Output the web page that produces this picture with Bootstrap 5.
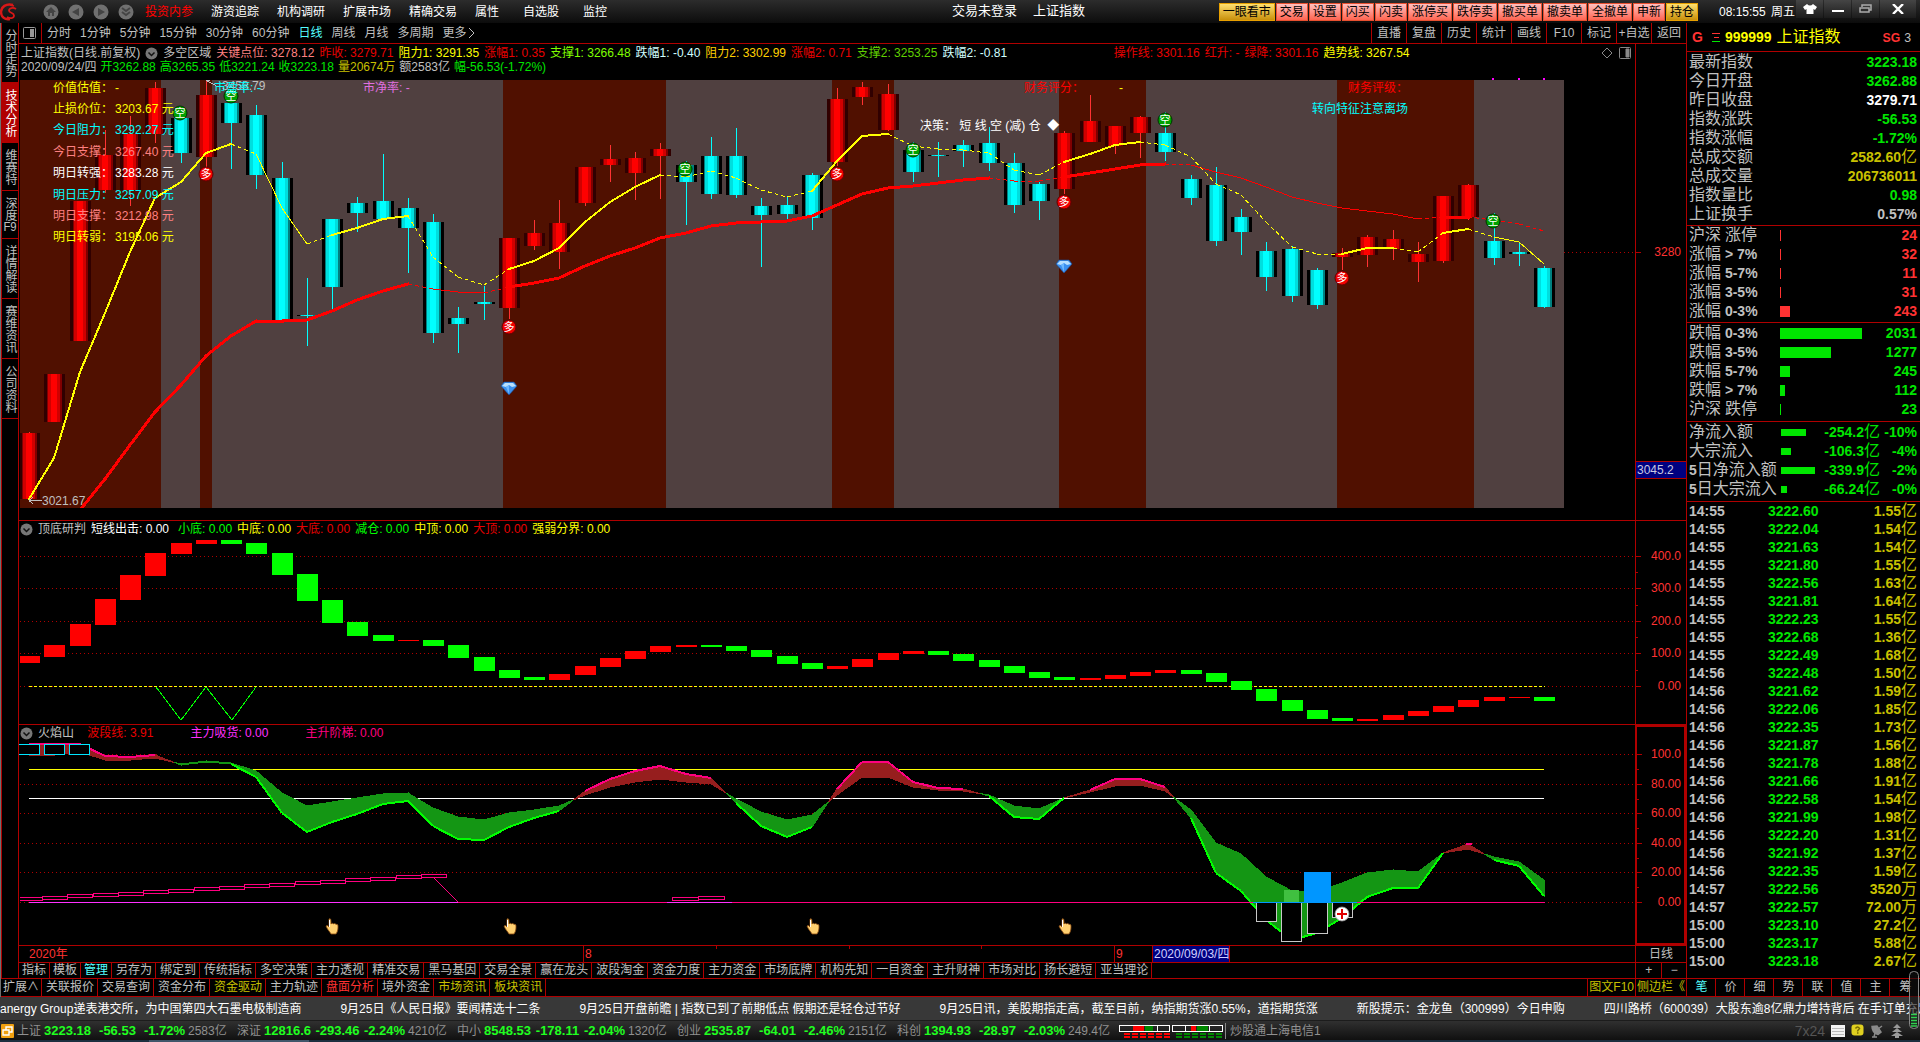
<!DOCTYPE html>
<html lang="zh-CN">
<head>
<meta charset="utf-8">
<meta name="viewport" content="width=device-width, initial-scale=1">
<title>上证指数 999999</title>
<link href="https://cdn.jsdelivr.net/npm/bootstrap@5.3.0/dist/css/bootstrap.min.css" rel="stylesheet">
<style>
:root{--edge:#b00000;--txt:#c0c0c0;--up:#ff3232;--down:#00e600;--gold:#c8c000;--mute:#909090}
html,body{height:100%}
body{background:#000;color:var(--txt);font:12px/16px "Liberation Sans","Noto Sans CJK SC",sans-serif;overflow:hidden}
button{background:none;border:0;color:inherit;padding:0;font:inherit;white-space:nowrap}
a{color:inherit;text-decoration:none}
svg{display:block}
.nowrap{white-space:nowrap}
.c-red{color:#f00}.c-up{color:var(--up)}.c-down{color:var(--down)}.c-yel{color:#ff0}.c-gold{color:var(--gold)}
.c-cyan{color:#0ff}.c-aqua{color:#5ff}.c-pale{color:#d0ffff}.c-pink{color:#ff8080}.c-rose{color:#ff0080}.c-mag{color:#ff30ff}
.c-orchid{color:#e070e0}.c-lime{color:#80ff00}.c-leaf{color:#60d000}.c-amber{color:#ffd000}.c-white{color:#fff}.c-brick{color:#e80000}
.c-grn{color:#00ff00}

.topbar{height:23px;background:linear-gradient(#2c2c2c,#0c0c0c);color:#fff}
.logo-slot{width:43px}
.round-nav{gap:9px;width:93px}
.menu-item{padding:0 9px}
.menu-item.wide{padding-left:15px}
.login{font-size:13px;gap:16px;left:952px;top:3px}
.quick{gap:1px}
.quick button{height:18px;padding:0 3px;color:#000;line-height:16px;border:1px solid #e85030;background:linear-gradient(#ffc0c0,#ff6450)}
.quick button.gold{border-color:#e8a000;background:linear-gradient(#ffe070,#c8900c)}
.clock{width:97px;padding-left:21px}
.win{height:18px;width:27px;background:linear-gradient(#454545,#1c1c1c);margin-left:1px}
.win.close{width:36px}
.win svg{margin:auto}

.left-edge{border-left:1px solid #707070}
.side{width:18px;border-left:1px solid var(--edge);border-right:1px solid var(--edge)}
.side button{writing-mode:vertical-rl;padding:6px 0 5px;line-height:16px;width:16px;border-bottom:1px solid var(--edge)}
.side button.on{background:#b00000;color:#fff}
.side .tcy{text-combine-upright:all}

.tools{height:21px;border-bottom:1px solid var(--edge)}
.tools .toggle{width:23px;border-right:1px solid var(--edge)}
.periods{gap:9px;padding-left:5px}
.acts button{width:35px;border-left:1px solid var(--edge)}

.pane{min-height:0;display:flex}
.pane+.pane{border-top:1px solid var(--edge)}
.pane-k{flex:476 1 0}.pane-a{flex:203 1 0}.pane-b{flex:220 1 0}
.plotcol{min-width:0;min-height:0}
.pane-k .plotcol{padding-bottom:12px}
.plotbox{min-height:0;position:relative}
.plotbox svg{position:absolute;inset:0;width:100%;height:100%}
.klegend{height:36px;padding:2px 0 0 2px;line-height:14px}
.klegend .first-half{width:67.7%}
.legend-line{gap:5px}
.sub-legend{height:16px;padding-left:1px;gap:5px}
.gap-wide{gap:37px}
.axis{width:51px;border-left:1px solid var(--edge);position:relative;color:var(--up)}
.axis span{position:absolute;left:0;right:0;padding-right:5px;text-align:right;margin-top:-8px}
.axis span::before{content:"";position:absolute;left:0;top:8px;width:5px;height:1px;background:var(--edge)}
.axis span.minor::before{width:2px}
.axis span.cursor{background:#000080;color:#c8c8e0;text-align:left;padding-left:1px;border:solid var(--edge);border-width:1px 0}
.axis span.cursor::before{display:none}
.pane-b .axis{border:2px solid var(--edge)}
.pane-b .axis span{padding-right:3px}
.note{position:absolute;white-space:nowrap;margin-top:-8px}
.valuation{position:absolute;left:34px;top:-3px;height:40%}
.valuation th{font-weight:400;width:62px}
.valuation td,.valuation th{padding:0}

.dates{height:17px;border-top:1px solid var(--edge)}
.dates .slot{position:relative;color:var(--up)}
.dates .datemark{position:absolute;top:0;height:16px;border-left:1px solid var(--edge);padding-left:1px}
.dates .datemark.short{height:3px}
.dates .datemark.bare{border:0}
.dates .datemark.cur{background:#000080;color:#d0d0ff;border-right:1px solid var(--edge)}
.dates .unit-col{width:51px;border-left:1px solid var(--edge)}
.strip{height:16px;border-top:1px solid var(--edge);line-height:15px}
.strip button{border-right:1px solid var(--edge);padding:0 3px 0 4px}
.strip button.narrow{padding:0 3px}
.strip .zoomers{width:51px;border-left:1px solid var(--edge)}
.strip2{height:19px;line-height:17px;border-top:1px solid var(--edge);border-bottom:1px solid var(--edge)}
.strip2 button.tight{padding:0 2px}
.strip2 button.corner{border:0;border-left:1px solid var(--edge);padding:0 1px}
.strip2 button.dock{width:51px;text-align:left}

.quote{width:234px;border-left:1px solid var(--edge);overflow:hidden}
.quote table{width:100%;font-weight:700;font-size:14px;border-collapse:collapse}
.quote td,.quote th{padding:0;line-height:19px;height:19px;white-space:nowrap}
.cjk{font-weight:400;font-size:16px;line-height:1}
.quote-head{height:28px;padding:0 9px 0 5px;font-size:14px;gap:5px}
.sect{border-top:1px solid var(--edge);padding:1px 3px 1px 2px}
.sect.tight-top{padding-top:0}
.sect.loose{padding-bottom:2px}
.sect .barcol{width:84px}
.bar{height:11px;background:var(--down);min-width:1px}
.bar.up{background:var(--up)}
.flow .bar{height:7px}
.tape td,.tape th{line-height:18px;height:18px}
.picks button{width:29px;border-right:1px solid var(--edge)}
.picks button:last-child{flex:1;border:0}
.pill{position:absolute;right:1px;bottom:13px;width:10px;height:58px}

.news{height:24px;background:#383838;border-bottom:1px solid #1c1c1c;color:#fff;gap:39px;overflow:hidden}
.status{height:19px;background:linear-gradient(#303030,#101010);color:var(--mute)}
.idx{display:grid;grid-template-columns:27px 50px 47px 47px 49px;white-space:nowrap}
.idx b{color:#20ff20;font-size:13px}
.idx b.mid{text-align:center}
.feed{border-left:1px solid #888;margin-left:2px;padding-left:4px}
.dim{color:#555;font-size:14px}
.trays{gap:6px;padding-right:16px}
.taskbar{height:2px;background:linear-gradient(90deg,#1c2f3f 0 149px,#40566a 149px 309px,#1c2f3f 309px)}
</style>
<script src="https://cdn.jsdelivr.net/npm/bootstrap@5.3.0/dist/js/bootstrap.bundle.min.js"></script>
</head>
<body class="d-flex flex-column vh-100">

<header class="topbar d-flex align-items-center position-relative flex-shrink-0">
  <div class="logo-slot">
    <svg width="18" height="20" viewBox="0 0 18 20" fill="none" stroke="#d81818"><path d="M13 3C6 1 1 5 1 10s4 8 9 7" stroke-width="2.400"/><path d="M16 7C13 5 9 6 9 8.500s5 2 5 5-4 3.500-7 1.500" stroke-width="1.800"/><path d="M10 3l4 1" stroke-width="1.500"/></svg>
  </div>
  <nav class="round-nav d-flex" aria-label="导航">
    <button aria-label="首页"><svg width="16" height="16"><circle cx="8" cy="8" r="7.500" fill="#707070"/><path d="M8 3L3 8h2v4h2V9h2v3h2V8h2z" fill="#444"/></svg></button>
    <button aria-label="后退"><svg width="16" height="16"><circle cx="8" cy="8" r="7.500" fill="#707070"/><path d="M4 8l7-4v8z" fill="#444"/></svg></button>
    <button aria-label="前进"><svg width="16" height="16"><circle cx="8" cy="8" r="7.500" fill="#707070"/><path d="M12 8L5 4v8z" fill="#444"/></svg></button>
    <button aria-label="展开"><svg width="16" height="16"><circle cx="8" cy="8" r="7.500" fill="#707070"/><path d="M4 4l4 3 4-3M4 8l4 3 4-3" fill="none" stroke="#444" stroke-width="2"/></svg></button>
  </nav>
  <nav class="d-flex flex-grow-1" aria-label="主菜单">
    <button class="menu-item c-red">投资内参</button><button class="menu-item">游资追踪</button><button class="menu-item">机构调研</button><button class="menu-item">扩展市场</button><button class="menu-item">精确交易</button><button class="menu-item">属性</button><button class="menu-item wide">自选股</button><button class="menu-item wide">监控</button>
  </nav>
  <div class="login d-flex position-absolute"><button>交易未登录</button><span>上证指数</span></div>
  <div class="quick d-flex">
    <button class="gold">一眼看市</button><button>交易</button><button>设置</button><button>闪买</button><button>闪卖</button><button>涨停买</button><button>跌停卖</button><button>撤买单</button><button>撤卖单</button><button>全撤单</button><button>申新</button><button class="gold">持仓</button>
  </div>
  <div class="clock d-flex justify-content-between nowrap"><span>08:15:55</span><span>周五</span></div>
  <div class="d-flex align-self-start pe-1">
    <button class="win d-flex" aria-label="皮肤"><svg width="14" height="10"><path d="M4 0L0 3l2 3 1.500-1V10h7V5L12 6l2-3-4-3Q7 3 4 0z" fill="#fff"/></svg></button>
    <button class="win d-flex" aria-label="最小化"><svg width="12" height="10"><path d="M0 6h12v2H0z" fill="#fff"/></svg></button>
    <button class="win d-flex" aria-label="还原"><svg width="13" height="10" fill="none" stroke="#aaa" stroke-width="1.500"><path d="M3 3V1h9v5h-2M1 4h9v4H1z"/></svg></button>
    <button class="win close d-flex" aria-label="关闭"><svg width="12" height="10"><path d="M1 0l10 10M11 0L1 10" stroke="#fff" stroke-width="2.400"/></svg></button>
  </div>
</header>

<div class="d-flex flex-grow-1 left-edge" id="work">
  <div class="d-flex flex-column flex-grow-1 plotcol">
    <div class="d-flex flex-grow-1 plotcol">
      <nav class="side d-flex flex-column align-items-center flex-shrink-0" aria-label="页面">
        <button>分时走势</button><button class="on">技术分析</button><button>维赛特</button><button>深度<span class="tcy">F9</span></button><button>详情解读</button><button>赛维资讯</button><button>公司资料</button>
      </nav>
      <main class="d-flex flex-column flex-grow-1 plotcol">
        <div class="tools d-flex align-items-stretch flex-shrink-0">
          <button class="toggle d-flex align-items-center ps-1" aria-label="侧栏"><svg width="13" height="12"><rect x=".5" y=".5" width="12" height="11" rx="1" fill="none" stroke="#999"/><path d="M7 2h4v8H7z" fill="#999"/></svg></button>
          <div class="periods d-flex flex-grow-1">
            <button>分时</button><button>1分钟</button><button>5分钟</button><button>15分钟</button><button>30分钟</button><button>60分钟</button><button class="c-aqua">日线</button><button>周线</button><button>月线</button><button>多周期</button><button class="d-flex align-items-center">更多<svg width="9" height="10"><path d="M2 0l5 5-5 5" fill="none" stroke="#c0c0c0"/></svg></button>
          </div>
          <div class="acts d-flex"><button>直播</button><button>复盘</button><button>历史</button><button>统计</button><button>画线</button><button>F10</button><button>标记</button><button>+自选</button><button>返回</button></div>
        </div>

        <section class="pane pane-k">
          <div class="plotcol d-flex flex-column flex-grow-1">
            <div class="klegend nowrap flex-shrink-0">
              <div class="d-flex align-items-center">
                <div class="first-half legend-line d-flex align-items-center">
                  <span>上证指数(日线.前复权)</span><svg width="13" height="13"><use href="#chev"/></svg><span>多空区域</span>
                  <span class="c-pink">关键点位: 3278.12</span><span class="c-brick">昨收: 3279.71</span><span class="c-yel">阻力1: 3291.35</span><span class="c-brick">涨幅1: 0.35</span><span class="c-lime">支撑1: 3266.48</span><span class="c-pale">跌幅1: -0.40</span><span class="c-amber">阻力2: 3302.99</span><span class="c-brick">涨幅2: 0.71</span><span class="c-leaf">支撑2: 3253.25</span><span class="c-pale">跌幅2: -0.81</span>
                </div>
                <div class="legend-line d-flex flex-grow-1">
                  <span class="c-brick">操作线: 3301.16</span><span class="c-brick">红升: -</span><span class="c-brick">绿降: 3301.16</span><span class="c-yel">趋势线: 3267.54</span>
                </div>
                <svg width="30" height="12" fill="none" stroke="#888"><path d="M1 6l5-5 5 5-5 5z"/><rect x="18.500" y=".5" width="11" height="11" rx="1"/><path d="M25 2h3v8h-3z" fill="#888"/></svg>
                <span class="pe-1"></span>
              </div>
              <div class="d-flex gap-1">
                <span>2020/09/24/四</span><span class="c-down">开3262.88</span><span class="c-down">高3265.35</span><span class="c-down">低3221.24</span><span class="c-down">收3223.18</span><span class="c-gold">量20674万</span><span>额2583亿</span><span class="c-down">幅-56.53(-1.72%)</span>
              </div>
            </div>
            <div class="plotbox flex-grow-1" id="kbox">
              <svg id="kplot" viewBox="19 80 1616 428" preserveAspectRatio="none" shape-rendering="crispEdges" overflow="visible"></svg>
              <table class="valuation">
                <tr class="c-yel"><th>价值估值：</th><td>-</td></tr>
                <tr class="c-yel"><th>止损价位：</th><td>3203.67 元</td></tr>
                <tr class="c-cyan"><th>今日阻力：</th><td>3292.27 元</td></tr>
                <tr class="c-pink"><th>今日支撑：</th><td>3267.40 元</td></tr>
                <tr class="c-white"><th>明日转强：</th><td>3283.28 元</td></tr>
                <tr class="c-cyan"><th>明日压力：</th><td>3257.09 元</td></tr>
                <tr class="c-pink"><th>明日支撑：</th><td>3212.98 元</td></tr>
                <tr class="c-yel"><th>明日转弱：</th><td>3195.06 元</td></tr>
              </table>
            </div>
          </div>
          <div class="axis flex-shrink-0" id="kaxis"></div>
        </section>

        <section class="pane pane-a">
          <div class="plotcol d-flex flex-column flex-grow-1">
            <div class="sub-legend d-flex align-items-center nowrap flex-shrink-0">
              <svg width="13" height="13"><use href="#chev"/></svg><span>顶底研判</span><span class="c-white pe-1">短线出击: 0.00</span><span class="c-grn">小底: 0.00</span><span class="c-yel">中底: 0.00</span><span class="c-brick">大底: 0.00</span><span class="c-grn">减仓: 0.00</span><span class="c-yel">中顶: 0.00</span><span class="c-brick">大顶: 0.00</span><span class="c-yel">强弱分界: 0.00</span>
            </div>
            <div class="plotbox flex-grow-1"><svg id="aplot" viewBox="19 537 1616 187" preserveAspectRatio="none" shape-rendering="crispEdges"></svg></div>
          </div>
          <div class="axis flex-shrink-0" id="aaxis"></div>
        </section>

        <section class="pane pane-b">
          <div class="plotcol d-flex flex-column flex-grow-1">
            <div class="sub-legend d-flex align-items-center nowrap flex-shrink-0">
              <svg width="13" height="13"><use href="#chev"/></svg><div class="d-flex gap-wide"><span>火焰山 &nbsp; <span class="c-brick">&nbsp;波段线: 3.91</span></span><span class="c-mag">主力吸货: 0.00</span><span class="c-rose">主升阶梯: 0.00</span></div>
            </div>
            <div class="plotbox flex-grow-1"><svg id="bplot" viewBox="19 741 1616 204" preserveAspectRatio="none" shape-rendering="crispEdges"></svg></div>
          </div>
          <div class="axis flex-shrink-0" id="baxis"></div>
        </section>

        <div class="dates d-flex flex-shrink-0">
          <div class="slot flex-grow-1" id="dates"></div>
          <div class="unit-col text-center">日线</div>
        </div>
        <div class="strip d-flex flex-shrink-0">
          <div class="d-flex flex-grow-1" id="tpl"></div>
          <div class="zoomers d-flex"><button class="flex-fill" aria-label="放大">+</button><button class="flex-fill border-0" aria-label="缩小">−</button></div>
        </div>
      </main>
    </div>
    <div class="strip2 strip d-flex flex-shrink-0">
      <div class="d-flex flex-grow-1" id="ext"></div>
      <button class="corner c-gold">图文F10</button><button class="corner dock c-gold">侧边栏《</button>
    </div>
  </div>

  <aside class="quote d-flex flex-column flex-shrink-0">
    <div class="quote-head d-flex align-items-center fw-bold">
      <span class="c-up">G</span>
      <svg width="12" height="10"><path d="M4 1.500h8M6 5.500h5" stroke="#ff3232"/><path d="M4 9.500h8" stroke="#00e600"/></svg>
      <span class="c-yel">999999</span><span class="c-yel cjk flex-grow-1">上证指数</span>
      <span><small class="c-up">SG</small> <small class="fw-normal">3</small></span>
    </div>
    <div class="sect"><table id="basic"></table></div>
    <div class="sect tight-top"><table id="rise"></table></div>
    <div class="sect loose"><table id="fall"></table></div>
    <div class="sect loose"><table id="flow" class="flow"></table></div>
    <div class="sect tight-top flex-grow-1"><table class="tape" id="tape"></table></div>
    <div class="strip2 strip picks d-flex px-0 flex-shrink-0"><button class="c-aqua">笔</button><button>价</button><button>细</button><button>势</button><button>联</button><button>值</button><button>主</button><button>筹</button></div>
  </aside>
</div>

<div class="news d-flex align-items-center nowrap flex-shrink-0">
  <a href="#">anergy Group递表港交所，为中国第四大石墨电极制造商</a><a href="#">9月25日《人民日报》要闻精选十二条</a><a href="#">9月25日开盘前瞻 | 指数已到了前期低点 假期还是轻仓过节好</a><a href="#">9月25日讯，美股期指走高，截至目前，纳指期货涨0.55%，道指期货涨</a><a href="#">新股提示：金龙鱼（300999）今日申购</a><a href="#">四川路桥（600039）大股东逾8亿鼎力增持背后 在手订单充足</a>
</div>
<footer class="status d-flex align-items-center flex-shrink-0">
  <svg class="flex-shrink-0" width="17" height="14"><rect width="13" height="14" x="1" rx="1" fill="#f0a010"/><path d="M3 6h6v5H3zM6 6V3h6v5H9" fill="none" stroke="#fff" stroke-width="1.400"/></svg>
  <div class="d-flex" id="indices"></div>
  <svg width="106" height="18" class="flex-shrink-0" shape-rendering="crispEdges"><g fill="none" stroke="#fff"><path d="M2.500 3.500h50v6h-50zM40.500 3.500v6M55.500 3.500h50v6h-50zM68.500 3.500v6M92.500 3.500v6"/></g><path d="M16 4h11v5H16zM74 4h5v5h-5z" fill="#f00"/><path d="M28 4h8v5h-8zM80 4h11v5H80z" fill="#080"/><path d="M7 12h46M7 15h46" stroke="#f00" stroke-width="2" stroke-dasharray="6 2"/><path d="M59 12h46M59 15h46" stroke="#080" stroke-width="2" stroke-dasharray="6 2"/></svg>
  <div class="feed flex-grow-1">炒股通上海电信1</div>
  <div class="trays d-flex align-items-center">
    <span class="dim">7x24</span>
    <svg width="14" height="12"><rect width="14" height="12" fill="#f4f4f4"/><path d="M1 3.500h12M1 6.500h12M1 9.500h12" stroke="#bbb"/></svg>
    <svg width="13" height="13"><rect x=".5" y=".5" width="12" height="11" rx="3" fill="#e0d020"/><path d="M4.500 4.500q2-3 4 0-2 2-2 3M6 9h1.500" fill="none" stroke="#776a00" stroke-width="1.500"/></svg>
    <svg width="14" height="14" fill="none" stroke="#8a8a8a" stroke-width="1.500"><path d="M2 2.500l5-.5 4 6-3 2.500C4 10 2 6 2 2.500z" fill="#8a8a8a"/><path d="M8 5l4-3M5 9l-1 4M2 13h5"/></svg>
    <svg width="14" height="14" fill="#9a9a9a"><path d="M7 0l4 4H3zM7 4l5 4H2zM7 8l6 4H9v2H5v-2H1z"/></svg>
  </div>
</footer>
<div class="taskbar flex-shrink-0"></div>

<svg class="pill" viewBox="0 0 10 58"><rect x=".5" y=".5" width="9" height="57" rx="4" fill="#111" fill-opacity=".6" stroke="#888"/><path d="M2 43.500h6M2 46.500h6M2 49.500h6M2 52.500h6M2 55h6" stroke="#30d050" stroke-width="1.500"/></svg>

<svg width="0" height="0" class="position-absolute"><defs>
  <g id="chev"><circle cx="6.500" cy="6.500" r="6" fill="#777"/><path d="M3.500 5.500l3 3 3-3" fill="none" stroke="#111" stroke-width="1.500"/></g>
  <g id="gem"><path d="M-8-2L-5-6H5L8-2 0 7z" fill="#3a90f0" stroke="#1c4c90" stroke-width=".6"/><path d="M-7-2L-4-5H4L7-2 3-1 0-3-3-1z" fill="#b8e0ff"/><path d="M-3-1L0 6 0-3z" fill="#6cb8ff"/></g>
  <g id="hand"><path d="M-3-8c2-1 2 1 2 5 1-1 2-1 2.500 0 1-1 2-.5 2.500.5 1-.5 2 0 2 1.500 0 3 0 5-2 8h-5c-1-2-4-5-5-8 1-1 2-.5 3 1z" fill="#ffd070" stroke="#8a4a10" stroke-width=".8"/><path d="M-2.500-7v7" stroke="#fff" stroke-width="1"/></g>
</defs></svg>

<script>
const X = i => Math.round(29 + 25.25 * i);
const by = id => document.getElementById(id);
const rect = (x, y, w, h, f) => `<rect x="${x}" y="${y}" width="${w}" height="${h}" fill="${f}"/>`;
const dots = (y, x1 = 20, x2 = 1635) => `<path d="M${x1} ${y}.5H${x2}" stroke="#b00000" stroke-dasharray="1 3"/>`;

/* ---- price pane ---- */
const bands = [20,161,200,212,503,666,832,894,1059,1146,1337,1474,1564];
let k = '';
for (let i = 0; i < bands.length - 1; i++) k += rect(bands[i], 80, bands[i+1] - bands[i], 428, i % 2 ? '#504040' : '#501000');
k += dots(252, 1564);
/* direction, body top, body bottom, high, low */
const C = `R433,499,432,502 R374,422,374,422 R201,341,201,341 R155,190,130,193 R134,190,116,206 R88,134,82,143 C118,153,118,163 R95,157,80,167 C103,123,101,169 C115,175,105,189 C178,320,162,320 C315,316,278,346 C219,287,219,309 C203,213,197,232 C201,219,154,219 C208,228,198,273 C222,333,214,343 C318,324,307,353 C302,304,286,320 R238,308,238,319 R233,246,220,250 R223,252,200,269 R167,203,167,206 R159,165,145,182 R158,173,152,200 R149,156,143,199 C165,182,161,225 C156,194,137,199 C156,195,128,198 C206,215,198,267 C205,214,196,220 C175,218,173,230 R99,162,88,166 R87,97,82,105 R94,130,84,131 C150,172,142,182 C155,156,142,177 C145,151,140,167 C143,163,127,171 C163,205,153,213 C184,201,182,220 R133,189,131,194 R121,142,95,142 R126,146,126,154 R117,133,116,158 C133,152,112,161 C179,198,175,205 C185,241,167,246 C217,232,209,255 C251,277,242,291 C249,296,246,302 C270,305,268,309 R253,257,248,270 R237,255,235,267 R239,249,230,260 R254,262,242,282 R196,261,196,263 R185,217,184,220 C241,258,213,265 C252,254,242,266 C268,307,266,308`.split(' ');
C.forEach((c, i) => {
  const [t, b, h, l] = c.slice(1).split(',').map(Number), x = X(i), H = Math.max(1, b - t);
  const p = c[0] === 'R' ? ['#300000','#800000','#d00000','#ff0000','#ff3232'] : ['#000','#008080','#00dede','#00ffff','#00ffff'];
  const lx = Math.max(20, x - 10);
  k += rect(x, h, 1, l - h, p[4]) + rect(lx, t, x + 11 - lx, H, p[0]) + rect(x - 7, t, 15, H, p[1]) + rect(x - 6, t, 12, H, p[2]) + rect(x - 3, t, 6, H, p[3]);
});
const Y = [499,458,372,313,252,198,182,153,144,154,208,244,235,228,219,216,257,277,285,269,261,248,222,202,187,175,177,171,178,190,197,191,161,136,134,146,149,150,153,170,175,162,154,145,142,145,157,184,195,222,247,254,254,248,248,252,233,229,237,242,264];
const R = [660,590,510,479,445,412,385,356,336,321,321,320,311,300,291,284,289,292,293,287,283,278,266,256,248,238,233,226,223,222,221,216,205,194,188,186,183,180,178,181,181,177,173,169,165,164,165,172,178,187,197,203,208,211,214,219,217,217,220,224,231];
/* one letter per segment: S thick, T thin, D dashed */
const ys = 'SSSSSSSSDTTDSSSDDDDSSSSSSDDDDDDSSSDDDDDDDSSSDDDDDDDDSSDDSDTT';
const rs = 'SSSSSSSSSSSSSSSDTTDSSSSSSSSSSSSSSSSSSSDDDSSSSDTTTTTTTTTDSDDD';
const line = (pts, st, col, w) => { let o = ''; for (let i = 0; i < 60; i++) {
  const s = st[i]; o += `<path d="M${X(i)} ${pts[i]}L${X(i+1)} ${pts[i+1]}" stroke="${col}" stroke-linecap="${s==='S'?'square':'butt'}" stroke-width="${s==='S'?w:1}" ${s==='D'?'stroke-dasharray="4 3"':''}/>`; } return o; };
k += `<clipPath id="kc"><path d="M20 80H1564V508H20z"/></clipPath><g clip-path="url(#kc)" fill="none">` + line(R, rs, '#ff0000', 3) + line(Y, ys, '#ffff00', 2) + '</g>';
k += `<g shape-rendering="auto" text-anchor="middle" font-size="11" fill="#fff">`;
[[180,113],[231,96],[685,169],[913,150],[1165,120],[1493,221]].forEach(([x, y]) => k += `<circle cx="${x}" cy="${y}" r="7" fill="#00a000" stroke="#003000"/><text x="${x}" y="${y+4}">空</text>`);
[[206,174],[509,327],[837,174],[1064,202],[1342,278]].forEach(([x, y]) => k += `<circle cx="${x}" cy="${y}" r="7" fill="#f00000" stroke="#600000"/><text x="${x}" y="${y+4}">多</text>`);
k += '</g><g shape-rendering="auto"><use href="#gem" x="509" y="388"/><use href="#gem" x="1064" y="266"/></g>';
k += `<g stroke="#c0c0c0" fill="none"><path d="M29 500.500H42M29 500.500l4-3M29 500.500l4 3M206 80.500l10 5M206 80.500h4"/></g>`;
[1492,1518,1543].forEach(x => k += rect(x, 78, 2, 2, '#ff00ff'));
by('kplot').innerHTML = k;
[[222,86,'3458.79',''],[42,501,'3021.67',''],[214,88,'市盈率: -','c-cyan'],[363,88,'市净率: -','c-orchid'],[1024,88,'财务评分：','c-red'],[1119,88,'-','c-yel'],[1348,88,'财务评级：','c-red'],[1312,109,'转向特征注意离场','c-cyan'],[920,126,'决策： 短 线 空 (减) 仓 &nbsp;◆','c-white']]
  .forEach(([x, y, t, c]) => by('kbox').insertAdjacentHTML('beforeend', `<span class="note ${c}" style="left:${(x-19)/16.16}%;top:${(y-80)/4.28}%">${t}</span>`));

/* ---- axis labels ---- */
const axis = (id, top, h, rows) => by(id).innerHTML = rows.map(([y, t, c]) => `<span class="${c||''}" style="top:${(y-top)/h*100}%">${t}</span>`).join('');
axis('kaxis', 44, 476, [[252,'3280'],[469,'3045.2','cursor']]);
axis('aaxis', 521, 203, [[556,'400.0'],[572,'','minor'],[588,'300.0'],[605,'','minor'],[621,'200.0'],[637,'','minor'],[653,'100.0'],[670,'','minor'],[686,'0.00']]);
axis('baxis', 727, 216, [[754,'100.0'],[769,'','minor'],[784,'80.00'],[799,'','minor'],[813,'60.00'],[828,'','minor'],[843,'40.00'],[858,'','minor'],[872,'20.00'],[887,'','minor'],[902,'0.00']]);

/* ---- pane a ---- */
const A = `R656,663 R645,657 R624,646 R599,625 R575,600 R553,576 R543,554 R540,544 G540,544 G543,554 G553,575 G574,601 G600,623 G622,636 G635,641 R640,641 G640,646 G645,658 G657,671 G670,678 G677,680 R674,680 R666,675 R658,667 R651,659 R646,652 R645,647 G645,647 G646,651 G650,657 G656,664 G663,669 R666,669 R659,667 R653,660 R651,654 G651,655 G654,661 G660,667 G666,673 G672,678 G677,680 R678,680 R675,679 R672,676 R670,673 G670,674 G673,682 G681,690 G689,701 G700,711 G710,719 G718,721 R719,721 R715,720 R711,716 R706,712 R700,707 R697,701 R697,698 G697,701`.split(' ');
let a = [556,588,621,653,686].map(y => dots(y)).join('');
a += '<path d="M29 686.500H1545" stroke="#ffff00" stroke-dasharray="3 2"/><path d="M156 687L181 720L206 687L232 720L256 687" fill="none" stroke="#00ff00"/>';
A.forEach((c, i) => { const [t, b] = c.slice(1).split(',').map(Number), lx = Math.max(20, X(i) - 10); a += rect(lx, t, X(i) + 11 - lx, b - t, c[0] === 'R' ? '#ff0000' : '#00ff00'); });
by('aplot').innerHTML = a;

/* ---- pane b: fast and slow lines with the ribbon between them ---- */
const F = [744,744,744,756,757,755,765,762,764,777,813,832,822,814,804,801,826,839,840,827,818,811,791,779,771,766,774,778,803,826,837,827,789,762,762,782,788,789,796,817,819,798,790,779,779,787,818,873,891,920,940,933,918,897,888,888,853,844,860,866,896];
const S = [755,755,752,760,760,758,764,761,763,771,793,806,802,798,794,793,808,817,820,813,810,806,795,787,782,779,782,784,799,812,820,815,795,777,777,787,790,791,795,806,809,798,792,786,785,791,810,843,854,877,891,891,883,873,870,872,853,849,857,862,880];
let b = [754,784,813,843,872,902].map(y => dots(y)).join('');
b += '<path d="M29 769.500H1544" stroke="#ffff00"/><path d="M29 798.500H1544" stroke="#ffffff"/>';
let edge = '';
for (let i = 0; i < 60; i++) {
  const x1 = X(i), x2 = X(i+1), d1 = F[i] - S[i], d2 = F[i+1] - S[i+1];
  const col = d => d > 0 ? '#149614' : '#961e1e';
  if (d1 * d2 < 0) {
    const t = d1 / (d1 - d2), xm = x1 + (x2 - x1) * t, ym = F[i] + (F[i+1] - F[i]) * t;
    [[x1, F[i], S[i], d1], [x2, F[i+1], S[i+1], d2]].forEach(([x, f, s, d]) => b += `<path d="M${x} ${f}L${xm} ${ym}L${x} ${s}z" fill="${col(d)}" stroke="${col(d)}"/>`);
  } else {
    b += `<path d="M${x1} ${F[i]}L${x2} ${F[i+1]}L${x2} ${S[i+1]}L${x1} ${S[i]}z" fill="${col(d1 + d2)}" stroke="${col(d1 + d2)}"/>`;
    if (d1 && Math.abs(d1 + d2) > 2) edge += `<path d="M${x1} ${F[i]}L${x2} ${F[i+1]}" stroke="${d1 + d2 > 0 ? '#00ff00' : '#ff0080'}" stroke-width="2"/>`;
  }
}
b += edge + '<path d="M1466 843.500h6" stroke="#ff0080" stroke-width="2"/>';
b += '<path d="M29 902.500H458M667 902.500H732" stroke="#ff30ff"/><path d="M458 902.500H667M732 902.500H1545M434 878L458 902" stroke="#ff0080"/>';
const steps = [897,896,894,893,892,890,889,887,886,884,883,881,880,878,877,875,874];
b += '<path d="M20 897.500h22v3h-22" fill="#000" stroke="#ff0080"/>';
steps.slice(1).forEach((y, i) => b += `<rect x="${X(i) + 13}.5" y="${y}.5" width="25" height="3" fill="#000" stroke="#ff0080"/>`);
b += '<path d="M672.500 897.500h26v3h-26zM698.500 896.500h26v3h-26z" fill="#000" stroke="#ff0080"/>';
b += '<path d="M14.500 744.500h25v10h-25zM44.500 744.500h20v10h-20zM69.500 744.500h20v10h-20z" fill="#000" stroke="#00e6ff"/>';
b += rect(1284, 890, 15, 12, '#40c040') + rect(1304, 872, 27, 30, '#0096ff');
[[1256,19],[1281,39],[1307,31],[1332,15]].forEach(([x, h]) => b += `<path d="M${x}.5 903v${h-1}h20v-${h-1}" fill="#000" stroke="#c8c8c8"/>`);
b += '<path d="M1253 902.500H1357" stroke="#0096ff"/>';
b += '<g shape-rendering="auto"><circle cx="1342" cy="914" r="7" fill="#fff" stroke="#999" stroke-width=".8"/><path d="M1342 909v10M1337 914h10" stroke="#e00000" stroke-width="2"/>' + [332,510,813,1065].map(x => `<use href="#hand" x="${x}" y="927"/>`).join('') + '</g>';
by('bplot').innerHTML = b;

by('dates').innerHTML = [[28,'2020年','bare'],[583,'8',''],[716,'','short'],[849,'','short'],[981,'','short'],[1114,'9',''],[1152,'2020/09/03/四','cur']]
  .map(([x, t, c]) => `<span class="datemark ${c}" style="left:${(x-19)/16.16}%">${t}</span>`).join('');

/* ---- tab strips ---- */
by('tpl').innerHTML = '指标 模板 管理 另存为 绑定到 传统指标 多空决策 主力透视 精准交易 黑马基因 交易全景 赢在龙头 波段淘金 资金力度 主力资金 市场底牌 机构先知 一目资金 主升财神 市场对比 扬长避短 亚当理论'
  .split(' ').map(t => `<button class="${t.length < 3 ? 'narrow' : ''} ${t === '管理' ? 'c-aqua' : ''}">${t}</button>`).join('');
const hue = {'扩展∧':'tight','资金驱动':'c-gold','盘面分析':'c-up','市场资讯':'c-gold','板块资讯':'c-gold'};
by('ext').innerHTML = '扩展∧ 关联报价 交易查询 资金分布 资金驱动 主力轨迹 盘面分析 境外资金 市场资讯 板块资讯'.split(' ').map(t => `<button class="${hue[t]||''}">${t}</button>`).join('');

/* ---- quote panel ---- */
const cj = s => s.replace(/[\u4e00-\u9fff]+/g, m => `<span class="cjk">${m}</span>`);
by('basic').innerHTML = [['最新指数','3223.18','c-down'],['今日开盘','3262.88','c-down'],['昨日收盘','3279.71','c-white'],['指数涨跌','-56.53','c-down'],['指数涨幅','-1.72%','c-down'],['总成交额','2582.60亿','c-gold'],['总成交量','206736011','c-gold'],['指数量比','0.98','c-down'],['上证换手','0.57%','']]
  .map(([n, v, c]) => `<tr><th>${cj(n)}</th><td class="text-end ${c}">${cj(v)}</td></tr>`).join('');
const dist = (id, up, rows) => by(id).innerHTML = rows.map(([n, w, v]) => `<tr><th>${cj(n)}</th><td class="barcol"><div class="bar ${up}" style="width:${w}px"></div></td><td class="text-end ${up ? 'c-up' : 'c-down'}" width="53">${v}</td></tr>`).join('');
dist('rise', 'up', [['沪深 涨停',1,24],['涨幅 &gt; 7%',1,32],['涨幅 5-7%',1,11],['涨幅 3-5%',1,31],['涨幅 0-3%',10,243]]);
dist('fall', '', [['跌幅 0-3%',82,2031],['跌幅 3-5%',51,1277],['跌幅 5-7%',10,245],['跌幅 &gt; 7%',5,112],['沪深 跌停',1,23]]);
by('flow').innerHTML = [['净流入额',25,'-254.2亿','-10%'],['大宗流入',10,'-106.3亿','-4%'],['5日净流入额',34,'-339.9亿','-2%'],['5日大宗流入',6,'-66.24亿','-0%']]
  .map(([n, w, v, p]) => `<tr><th width="92">${cj(n)}</th><td width="36"><div class="bar" style="width:${w}px"></div></td><td class="text-end c-down">${cj(v)}</td><td class="text-end c-down" width="37">${p}</td></tr>`).join('');
const T = `14:55 3222.60 1.55亿|14:55 3222.04 1.54亿|14:55 3221.63 1.54亿|14:55 3221.80 1.55亿|14:55 3222.56 1.63亿|14:55 3221.81 1.64亿|14:55 3222.23 1.55亿|14:55 3222.68 1.36亿|14:55 3222.49 1.68亿|14:56 3222.48 1.50亿|14:56 3221.62 1.59亿|14:56 3222.06 1.85亿|14:56 3222.35 1.73亿|14:56 3221.87 1.56亿|14:56 3221.78 1.88亿|14:56 3221.66 1.91亿|14:56 3222.58 1.54亿|14:56 3221.99 1.98亿|14:56 3222.20 1.31亿|14:56 3221.92 1.37亿|14:56 3222.35 1.59亿|14:57 3222.56 3520万|14:57 3222.57 72.00万|15:00 3223.10 27.2亿|15:00 3223.17 5.88亿|15:00 3223.18 2.67亿`;
by('tape').innerHTML = T.split('|').map(r => { const [t, p, v] = r.split(' '); return `<tr><th width="79">${t}</th><td class="c-down">${p}</td><td class="text-end c-gold">${cj(v)}</td></tr>`; }).join('');

by('indices').innerHTML = [['上证','3223.18','-56.53','-1.72%','2583亿'],['深证','12816.6','-293.46','-2.24%','4210亿'],['中小','8548.53','-178.11','-2.04%','1320亿'],['创业','2535.87','-64.01','-2.46%','2151亿'],['科创','1394.93','-28.97','-2.03%','249.4亿']]
  .map(r => `<div class="idx"><span>${r[0]}</span><b>${r[1]}</b><b class="mid">${r[2]}</b><b class="mid">${r[3]}</b><span>${r[4]}</span></div>`).join('');
</script>
</body>
</html>
